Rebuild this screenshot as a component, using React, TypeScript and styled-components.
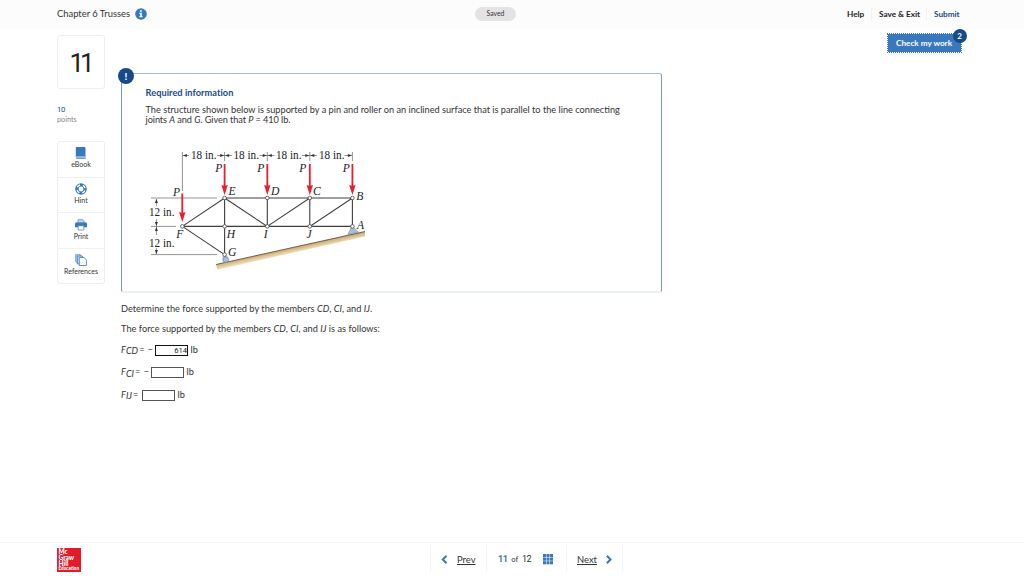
import styled, { createGlobalStyle } from "styled-components";

const BLUE = "#3a78bd";
const NAVY = "#174a86";

const tools = ["eBook", "Hint", "Print", "References"];

const answers = [
  { sub: "CD", sign: "= −", value: "614", lead: 34, height: 22 },
  { sub: "CI", sign: "= −", value: "", lead: 30, height: 23 },
  { sub: "IJ", sign: "=", value: "", lead: 21, height: 22 },
];

const joints: [number, number][] = [
  [182.3, 226.4],
  [224.6, 198],
  [267.3, 198],
  [309.8, 198],
  [352.4, 198],
  [224.6, 226.4],
  [267.3, 226.4],
  [309.8, 226.4],
  [352.4, 226.4],
  [224.6, 254.6],
];

const members =
  "M224.6 198H352.4M182.3 226.4H352.4M182.3 226.4L224.6 198V254.6M182.3 226.4L224.6 254.6M224.6 198L267.3 226.4V198M267.3 226.4L309.8 198V226.4L352.4 198V226.4";

const loads = [
  { x: 182.3, top: 193.5, tip: 222 },
  { x: 224.6, top: 164, tip: 195 },
  { x: 267.3, top: 164, tip: 195 },
  { x: 309.8, top: 164, tip: 195 },
  { x: 352.4, top: 164, tip: 195 },
];

const letters: [string, number, number][] = [
  ["P", 173, 196],
  ["P", 215.3, 172],
  ["P", 257.3, 172],
  ["P", 299.3, 172],
  ["P", 342.8, 172],
  ["E", 228.5, 195],
  ["D", 271, 195],
  ["C", 313, 195],
  ["B", 356.2, 200],
  ["A", 357, 228.5],
  ["F", 176.2, 238],
  ["H", 226.8, 238],
  ["I", 263.8, 238],
  ["J", 306.5, 238],
  ["G", 228, 256],
];

const ToolIcon = ({ name }: { name: string }) => (
  <svg width="12" height="12" viewBox="0 0 12 12">
    {name === "eBook" && (
      <>
        <path d="M2 1H10.8V11.4H2.4Q1 11.4 1 10.2Z" fill="#a5c2e2" />
        <path d="M1.8 0H10.2V9.3H2Q1.2 9.3 .8 10V1Q.8 0 1.8 0Z" fill={BLUE} />
        <path d="M1.2 11.4H10.8" stroke={BLUE} strokeWidth=".7" />
      </>
    )}
    {name === "Hint" && (
      <>
        <circle cx="6" cy="6" r="4.1" fill="none" stroke={BLUE} strokeWidth="3.4" />
        <circle
          cx="6"
          cy="6"
          r="4.1"
          fill="none"
          stroke="#fff"
          strokeWidth="1.4"
          strokeDasharray="3.4 3.04"
          strokeDashoffset="-1.52"
        />
      </>
    )}
    {name === "Print" && (
      <>
        <path d="M3 3V.8H8L9 1.8V3" fill="#c8daee" stroke="#6f9fd2" />
        <path d="M1.5 3.3H10.5Q12 3.3 12 4.8V8.3H0V4.8Q0 3.3 1.5 3.3Z" fill={BLUE} />
        <path d="M3.2 6.7H8.8V11H3.2Z" fill="#fff" stroke={BLUE} strokeWidth=".7" />
      </>
    )}
    {name === "References" && (
      <g fill="#fff" stroke={BLUE} strokeWidth=".8">
        <path d="M.5 .5H5L7 2V8.5H1.5L.5 7.5Z" fill="#a9c5e4" stroke="#7ea8d6" />
        <path d="M2.3 2H7L9 4V10H2.3Z" fill="#c8daee" />
        <path d="M4.3 3.5H9L11.4 5.7V11.5H4.3Z" />
      </g>
    )}
  </svg>
);

const TrussDiagram = () => (
  <Diagram width="225" height="126" viewBox="145 146 225 126">
    <defs>
      <linearGradient id="ground" x1="290" y1="248" x2="291.2" y2="253.5" gradientUnits="userSpaceOnUse">
        <stop offset="0" stopColor="#c9a568" />
        <stop offset="1" stopColor="#f3e4c4" />
      </linearGradient>
    </defs>
    <path d="M216 264.5L365 231.5V236.5L217.5 269.7Z" fill="url(#ground)" />
    <path d="M216 264.5L365 231.5" stroke="#4b4539" strokeWidth=".8" />
    <g stroke="#777" strokeWidth=".8" fill="none">
      <path d="M182.4 152V191M151 198H217M151 226.4H176M151 254.6H217" />
      <path d="M224.6 152V161M267.3 152V161M309.8 152V161M352.4 152V161" />
      <path d="M183 155.5H189M217 155.5H232M259.5 155.5H274.5M302 155.5H317M344.5 155.5H352M156.4 199V206M156.4 219V235M156.4 248V254" />
    </g>
    <g fill="#333">
      {[182.4, 224.6, 267.3, 309.8].map((x) => (
        <path key={x} d={`M${x + 0.5} 155.5l4-1.5v3z`} />
      ))}
      {[224.6, 267.3, 309.8, 352.4].map((x) => (
        <path key={x} d={`M${x - 0.5} 155.5l-4-1.5v3z`} />
      ))}
      <path d="M156.4 199l-1.5 4h3zM156.4 226l-1.5-4h3zM156.4 227l-1.5 4h3zM156.4 254l-1.5-4h3z" />
    </g>
    <path d="M351.5 227L347.8 234.5L358.5 232.2L353.3 227Z" fill="#a9bdd5" stroke="#7187a2" strokeWidth=".6" />
    <path d="M222.5 256V261.5H227.5V256Z" fill="#b6c6d9" />
    <circle cx="225.8" cy="259.6" r="2.8" fill="#a9bfd9" stroke="#637b98" strokeWidth=".6" />
    <path d={members} fill="none" stroke="#3e3e3e" strokeWidth="1.1" />
    {joints.map(([x, y]) => (
      <circle key={`${x}-${y}`} cx={x} cy={y} r="1.8" fill="#fff" stroke="#444" strokeWidth=".8" />
    ))}
    {loads.map(({ x, top, tip }) => (
      <g key={x} fill="#ec1c2e">
        <path d={`M${x - 0.9} ${top}h1.8V${tip - 8}h-1.8z`} />
        <path d={`M${x} ${tip}l-3.2-10q3.2 1.5 6.4 0z`} />
      </g>
    ))}
    <g fill="#222" fontFamily="'Liberation Serif', serif" fontSize="11.6">
      {[191, 233.5, 276, 319].map((x) => (
        <text key={x} x={x} y="159.2" textLength="25.5" lengthAdjust="spacingAndGlyphs">18 in.</text>
      ))}
      <text x="149" y="215.7" textLength="25.5" lengthAdjust="spacingAndGlyphs">12 in.</text>
      <text x="149" y="246.5" textLength="25.5" lengthAdjust="spacingAndGlyphs">12 in.</text>
      {letters.map(([label, x, y]) => (
        <text key={`${label}-${x}`} x={x} y={y} fontStyle="italic">{label}</text>
      ))}
    </g>
  </Diagram>
);

const App = () => {
  return (
    <Page>
      <GlobalStyle />
      <Header>
        <Title>Chapter 6 Trusses</Title>
        <svg width="12" height="12" viewBox="0 0 12 12">
          <circle cx="6" cy="6" r="5.8" fill={BLUE} />
          <path d="M5 2.2H6.8V3.7H5ZM4.3 4.8H6.8V8.2H7.7V9.3H4.2V8.2H5.2V5.8H4.3Z" fill="#fff" />
        </svg>
        <Saved>Saved</Saved>
        <HeaderLinks>
          <HeaderLink $width={24}>Help</HeaderLink>
          <HeaderLink $width={55}>Save &amp; Exit</HeaderLink>
          <HeaderLink $width={34} $primary>Submit</HeaderLink>
        </HeaderLinks>
      </Header>

      <Body>
        <Sidebar>
          <QuestionNumber>11</QuestionNumber>
          <Points>
            <b>10</b>
            <span>points</span>
          </Points>
          <ToolList>
            {tools.map((tool) => (
              <Tool key={tool}>
                <ToolIcon name={tool} />
                <span>{tool}</span>
              </Tool>
            ))}
          </ToolList>
        </Sidebar>

        <Question>
          <InfoPanel>
            <Alert>!</Alert>
            <InfoTitle>Required information</InfoTitle>
            <InfoText>
              <Line>The structure shown below is supported by a pin and roller on an inclined surface that is parallel to the line connecting</Line>
              <Line $spacing={-0.08}>joints <i>A</i> and <i>G</i>. Given that <i>P</i> = 410 lb.</Line>
            </InfoText>
            <TrussDiagram />
          </InfoPanel>
          <Prompt>Determine the force supported by the members <i>CD</i>, <i>CI</i>, and <i>IJ</i>.</Prompt>
          <Prompt>The force supported by the members <i>CD</i>, <i>CI</i>, and <i>IJ</i> is as follows:</Prompt>
          <Answers>
            {answers.map(({ sub, sign, value, lead, height }) => (
              <Answer key={sub} $height={height}>
                <Label $width={lead}>
                  <i>F</i>
                  <Sub>{sub}</Sub>
                  <Sign>{sign}</Sign>
                </Label>
                <AnswerInput defaultValue={value} $filled={value !== ""} />
                <span>lb</span>
              </Answer>
            ))}
          </Answers>
        </Question>

        <CheckButton>
          Check my work
          <Badge>2</Badge>
        </CheckButton>
      </Body>

      <Footer>
        <Brand>
          <span>Mc</span>
          <span>Graw</span>
          <span>Hill</span>
          <small>Education</small>
        </Brand>
        <Pager>
          <PagerCell $width={56}>
            <svg width="7" height="9" viewBox="0 0 7 9">
              <path d="M5.5 .8L1.8 4.5L5.5 8.2" fill="none" stroke={BLUE} strokeWidth="2" />
            </svg>
            <u>Prev</u>
          </PagerCell>
          <PagerCell $width={80}>
            <Count>
              <b>11</b>
              <small>of</small>
              <span>12</span>
            </Count>
            <svg width="10" height="11" viewBox="0 0 10 11">
              {[0, 3.6, 7.2].map((y) =>
                [0, 3.5, 7].map((x) => (
                  <rect key={`${x}-${y}`} x={x} y={y} width="3" height="3.1" fill={BLUE} />
                ))
              )}
            </svg>
          </PagerCell>
          <PagerCell $width={56}>
            <u>Next</u>
            <svg width="7" height="9" viewBox="0 0 7 9">
              <path d="M1.8 .8L5.5 4.5L1.8 8.2" fill="none" stroke={BLUE} strokeWidth="2" />
            </svg>
          </PagerCell>
        </Pager>
      </Footer>
    </Page>
  );
};

export default App;

const GlobalStyle = createGlobalStyle`
  * {
    box-sizing: border-box;
  }

  body {
    margin: 0;
    background: #fff;
    color: #333;
    font-family: Lato, "Liberation Sans", sans-serif;
    font-size: 9.2px;
  }

  svg {
    display: block;
    flex: none;
  }
`;

const Page = styled.div`
  display: flex;
  flex-direction: column;
  width: 1024px;
  height: 576px;
  overflow: hidden;
  white-space: nowrap;
`;

const Header = styled.header`
  display: flex;
  flex: none;
  align-items: center;
  height: 30px;
  padding: 0 64px 3px 57px;
  background: #fcfcfc;
`;

const Title = styled.div`
  width: 77.5px;
  font-size: 9.4px;
`;

const Saved = styled.div`
  width: 41px;
  height: 14px;
  margin-left: 328.5px;
  border-radius: 7px;
  background: #e4e2e5;
  font-size: 6.8px;
  line-height: 12.5px;
  text-align: center;
`;

const HeaderLinks = styled.nav`
  display: flex;
  margin-left: auto;
`;

const HeaderLink = styled.div<{ $width: number; $primary?: boolean }>`
  width: ${({ $width }) => $width}px;
  color: ${({ $primary }) => ($primary ? NAVY : "#222")};
  font-size: 8.2px;
  font-weight: 700;
  line-height: 12px;
  text-align: left;

  & + & {
    padding-left: 7px;
    border-left: 1px solid #f1f1f1;
  }
`;

const Body = styled.main`
  display: flex;
  flex: 1;
  padding: 3px 62.5px 0 57px;
`;

const Sidebar = styled.aside`
  width: 48px;
  padding-top: 2px;
`;

const QuestionNumber = styled.div`
  height: 54px;
  padding-left: 3px;
  border: 1px solid #eeeeee;
  border-radius: 3px;
  color: #222;
  font-family: Roboto, sans-serif;
  font-size: 26px;
  line-height: 55px;
  text-align: center;
  letter-spacing: -4px;
  text-indent: -5px;
`;

const Points = styled.div`
  display: flex;
  flex-direction: column;
  height: 52px;
  padding-top: 16px;
  color: #888;
  font-size: 7.3px;
  line-height: 9px;

  b {
    color: ${NAVY};
    font: 7.8px/10px Roboto, sans-serif;
    letter-spacing: -0.3px;
  }
`;

const ToolList = styled.div`
  border: 1px solid #eeeeee;
  border-radius: 3px;
`;

const Tool = styled.div`
  display: flex;
  flex-direction: column;
  align-items: center;
  gap: 1px;
  height: 35.2px;
  padding-top: 5.2px;
  font-size: 7px;
  line-height: 8px;

  & + & {
    border-top: 1px solid #f0f0f0;
  }
`;

const Question = styled.section`
  width: 541px;
  margin-left: 16px;
  padding-top: 40px;
`;

const InfoPanel = styled.div`
  position: relative;
  height: 220px;
  padding: 13px 24px 0 23.5px;
  border: 1px solid #7f97bc;
  border-top-color: #a9b9d2;
  border-bottom: 2px solid #eaf0f7;
  border-radius: 3px;
`;

const Alert = styled.div`
  position: absolute;
  top: -6px;
  left: -4px;
  width: 16px;
  height: 16px;
  border-radius: 50%;
  background: ${NAVY};
  color: #fff;
  font-size: 10px;
  font-weight: 900;
  line-height: 16px;
  text-align: center;
`;

const InfoTitle = styled.div`
  color: ${NAVY};
  font-size: 9.2px;
  font-weight: 700;
  letter-spacing: 0.06px;
  line-height: 12px;
`;

const InfoText = styled.div`
  padding-top: 6px;
`;

const Line = styled.div<{ $spacing?: number }>`
  letter-spacing: ${({ $spacing = 0 }) => $spacing}px;
  line-height: 10px;
`;

const Diagram = styled.svg`
  margin: 21px 0 0 -0.5px;
`;

const Prompt = styled.div`
  padding-top: 11px;
  letter-spacing: 0.03px;
  line-height: 10px;

  & + & {
    padding-top: 10px;
  }
`;

const Answers = styled.div`
  padding-top: 5px;
`;

const Answer = styled.div<{ $height: number }>`
  display: flex;
  align-items: center;
  height: ${({ $height }) => $height}px;

  > span {
    padding: 0 0 2px 2.5px;
  }
`;

const Label = styled.div<{ $width: number }>`
  display: flex;
  align-items: center;
  width: ${({ $width }) => $width}px;
  padding-bottom: 2px;
`;

const Sub = styled.i`
  padding-top: 3px;
`;

const Sign = styled.span`
  padding-left: 1px;
  word-spacing: 1px;
`;

const AnswerInput = styled.input<{ $filled: boolean }>`
  width: 33px;
  height: 11px;
  padding: 0;
  border: 1px solid ${({ $filled }) => ($filled ? "#111" : "#555")};
  background: #fff;
  color: #222;
  font: 7.6px Roboto, sans-serif;
  text-align: right;
`;

const CheckButton = styled.button`
  position: relative;
  width: 75px;
  height: 20px;
  margin-left: auto;
  padding: 0;
  border: 1px dotted ${BLUE};
  background: ${BLUE};
  background-clip: padding-box;
  color: #fff;
  font: 700 8.2px Lato, sans-serif;
`;

const Badge = styled.span`
  position: absolute;
  top: -5px;
  right: -6px;
  width: 14px;
  height: 14px;
  border-radius: 50%;
  background: ${NAVY};
  font-size: 8px;
  line-height: 14px;
`;

const Footer = styled.footer`
  display: flex;
  flex: none;
  height: 34px;
  padding: 3px 0 0 57px;
  border-top: 1px solid #f5f5f5;
`;

const Brand = styled.div`
  display: flex;
  flex-direction: column;
  width: 24px;
  height: 24px;
  margin-top: 2px;
  padding: 1px 0 0 1.5px;
  background: #e21b2b;
  color: #fff;
  font-size: 6.5px;
  font-weight: 900;
  line-height: 5.8px;

  small {
    font-size: 4.6px;
    line-height: 5px;
  }
`;

const Pager = styled.div`
  display: flex;
  height: 26px;
  margin-left: 349px;
  border-right: 1px solid #f3f3f3;
`;

const PagerCell = styled.div<{ $width: number }>`
  display: flex;
  align-items: center;
  justify-content: space-between;
  width: ${({ $width }) => $width}px;
  padding: 0 10.5px 0 10px;
  border-left: 1px solid #f3f3f3;
  font-size: 9.4px;

  &:nth-child(2) {
    padding: 0 13px 0 11px;
  }

  u {
    text-underline-offset: 1px;
  }
`;

const Count = styled.div`
  display: flex;
  align-items: baseline;
  width: 33px;
  justify-content: space-between;
  font-family: Roboto, sans-serif;
  font-size: 9px;
  letter-spacing: -0.5px;

  b {
    color: ${BLUE};
  }

  small {
    font-size: 7.5px;
    letter-spacing: 0;
  }
`;
